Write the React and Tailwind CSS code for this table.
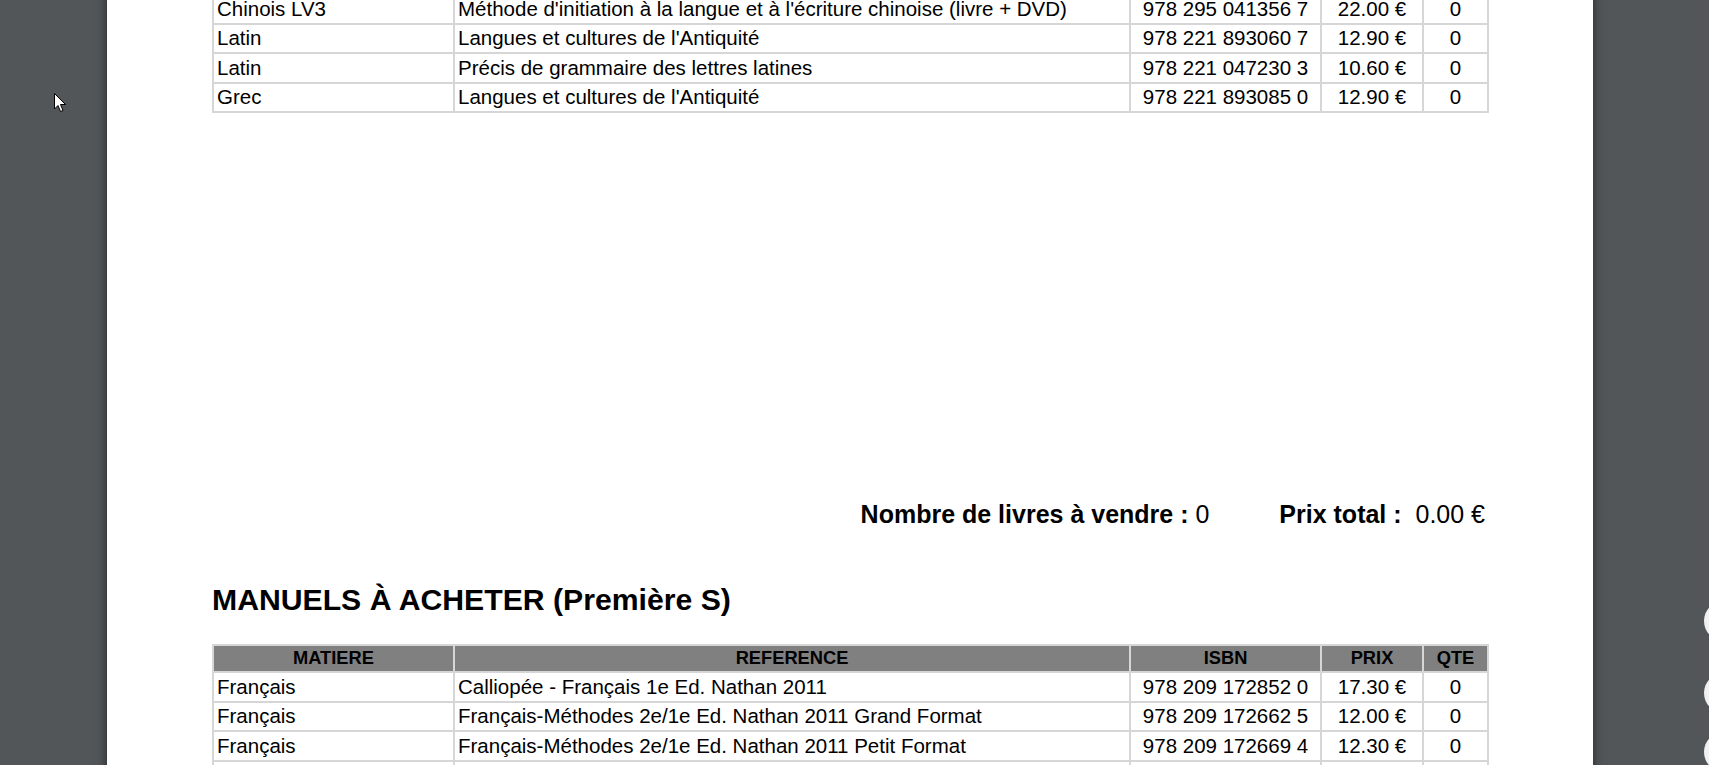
import React from 'react';

// --- DATA ---
const soldBooks = [
  ['Chinois LV3', "Méthode d'initiation à la langue et à l'écriture chinoise (livre + DVD)", '978 295 041356 7', '22.00 €', '0'],
  ['Latin', "Langues et cultures de l'Antiquité", '978 221 893060 7', '12.90 €', '0'],
  ['Latin', 'Précis de grammaire des lettres latines', '978 221 047230 3', '10.60 €', '0'],
  ['Grec', "Langues et cultures de l'Antiquité", '978 221 893085 0', '12.90 €', '0'],
];

const toBuy = [
  ['Français', 'Calliopée - Français 1e Ed. Nathan 2011', '978 209 172852 0', '17.30 €', '0'],
  ['Français', 'Français-Méthodes 2e/1e Ed. Nathan 2011 Grand Format', '978 209 172662 5', '12.00 €', '0'],
  ['Français', 'Français-Méthodes 2e/1e Ed. Nathan 2011 Petit Format', '978 209 172669 4', '12.30 €', '0'],
  ['', '', '', '', ''],
];

const Cols = () => (
  <colgroup>
    <col className="w-[241px]" />
    <col className="w-[676px]" />
    <col className="w-[191px]" />
    <col className="w-[102px]" />
    <col className="w-[65px]" />
  </colgroup>
);

const Row = ({ cells }) => (
  <tr className="h-[29.5px]">
    <td className="border-2 border-[#d6d6d6] px-[3px] py-0 whitespace-nowrap">{cells[0]}</td>
    <td className="border-2 border-[#d6d6d6] px-[3px] py-0 whitespace-nowrap">{cells[1]}</td>
    <td className="border-2 border-[#d6d6d6] px-[3px] py-0 text-center whitespace-nowrap">{cells[2]}</td>
    <td className="border-2 border-[#d6d6d6] px-[3px] py-0 text-center whitespace-nowrap">{cells[3]}</td>
    <td className="border-2 border-[#d6d6d6] px-[3px] py-0 text-center whitespace-nowrap">{cells[4]}</td>
  </tr>
);

const Cursor = () => (
  <svg className="absolute left-[54px] top-[93px]" width="13" height="20" viewBox="0 0 13 20">
    <path d="M0.5 0.5 L0.5 16 L4 12.5 L6.5 18.5 L9 17.5 L6.5 11.5 L11.5 11.5 Z" fill="#fff" stroke="#000" strokeWidth="1" strokeLinejoin="round" />
  </svg>
);

//! --- MAIN ---
export default function App() {
  return (
    <div className="relative h-screen w-full overflow-hidden bg-[#525659] font-['Liberation_Sans',Arial,sans-serif] text-black">
      <Cursor />

      {/* viewer zoom buttons, mostly off screen */}
      <div className="absolute left-[1704px] top-[601px] h-[40px] w-[40px] rounded-full bg-[#f1f1f1]" />
      <div className="absolute left-[1704px] top-[673px] h-[40px] w-[40px] rounded-full bg-[#f1f1f1]" />
      <div className="absolute left-[1704px] top-[732px] h-[40px] w-[40px] rounded-full bg-[#f1f1f1]" />

      {/* PDF page */}
      <div className="ml-[107px] w-[1486px] min-h-[800px] bg-white px-[105px] -mt-[7px] shadow-[0_0_10px_rgba(0,0,0,0.55)]">
        <table className="table-fixed border-collapse w-[1275px] text-[20.5px] leading-none">
          <Cols />
          <tbody>
            {soldBooks.map((r, i) => <Row key={i} cells={r} />)}
          </tbody>
        </table>

        {/* totals */}
        <div className="mt-[387px] flex justify-end gap-[70px] pr-[3px] text-[25px] leading-[28px]">
          <div><span className="font-bold">Nombre de livres à vendre :</span> 0</div>
          <div className="whitespace-pre"><span className="font-bold">Prix total :</span>  0.00 €</div>
        </div>

        <h2 className="mt-[54px] text-[30.2px] font-bold leading-[36px]">MANUELS À ACHETER (Première S)</h2>

        <table className="mt-[26px] table-fixed border-collapse w-[1275px] text-[20.5px] leading-none">
          <Cols />
          <thead>
            <tr className="h-[27px] bg-[#808080] text-[18.3px] font-bold">
              <th className="border-2 border-[#d6d6d6] py-0">MATIERE</th>
              <th className="border-2 border-[#d6d6d6] py-0">REFERENCE</th>
              <th className="border-2 border-[#d6d6d6] py-0">ISBN</th>
              <th className="border-2 border-[#d6d6d6] py-0">PRIX</th>
              <th className="border-2 border-[#d6d6d6] py-0">QTE</th>
            </tr>
          </thead>
          <tbody>
            {toBuy.map((r, i) => <Row key={i} cells={r} />)}
          </tbody>
        </table>
      </div>
    </div>
  );
}
